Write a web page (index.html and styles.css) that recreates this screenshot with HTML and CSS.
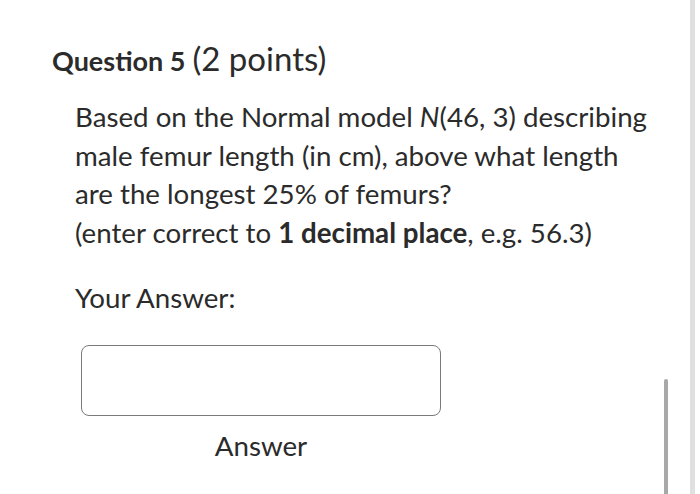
FILE: index.html
```html
<!DOCTYPE html>
<html>
<head>
<meta charset="utf-8">
<link rel="stylesheet" href="styles.css">
</head>
<body>
<div class="page">
  <div class="content">
    <h2 class="title"><span class="qnum">Question 5</span> <span class="points">(2 points)</span></h2>
    <div class="question">
      <p class="prompt">Based on the Normal model <i>N</i>(46, 3) describing male femur length (in cm), above what length are the longest 25% of femurs?<br>(enter correct to <b>1 decimal place</b>, e.g. 56.3)</p>
      <p class="label">Your Answer:</p>
      <div class="answer">
        <div class="answer-box"></div>
        <div class="answer-caption">Answer</div>
      </div>
    </div>
  </div>
  <div class="scroll-thumb"></div>
  <div class="edge"></div>
</div>
</body>
</html>
```
FILE: styles.css
```css
html, body {
  margin: 0;
  padding: 0;
  background: #fff;
}
body {
  font-family: Lato, "Open Sans", sans-serif;
  color: #2b2b2b;
  width: 700px;
  height: 494px;
  overflow: hidden;
}
.page {
  position: relative;
  display: flex;
  height: 494px;
}
.content {
  flex: 1;
  padding: 41px 0 0 52px;
}
.title {
  margin: 0;
  font-size: 27px;
  font-weight: 400;
  line-height: 40px;
}
.qnum {
  font-weight: 700;
}
.points {
  font-size: 33px;
  line-height: 30px;
}
.question {
  padding-left: 23px;
  margin-top: 17px;
}
.prompt {
  margin: 0;
  width: 584px;
  font-size: 27.7px;
  line-height: 38.5px;
}
.label {
  margin: 27px 0 0;
  font-size: 27.7px;
  line-height: 38px;
}
.answer {
  width: 360px;
  margin: 28px 0 0 6px;
}
.answer-box {
  box-sizing: border-box;
  height: 71px;
  border: 1.5px solid #7a7a7a;
  border-radius: 8px;
}
.answer-caption {
  text-align: center;
  margin-top: 11px;
  font-size: 27.7px;
  line-height: 38px;
}
.scroll-thumb {
  position: absolute;
  left: 664px;
  top: 379px;
  width: 4px;
  height: 120px;
  background: #a8a8a8;
  border-radius: 2px;
}
.edge {
  width: 5px;
  margin-right: 5px;
  background: #e0e0e0;
}
```
